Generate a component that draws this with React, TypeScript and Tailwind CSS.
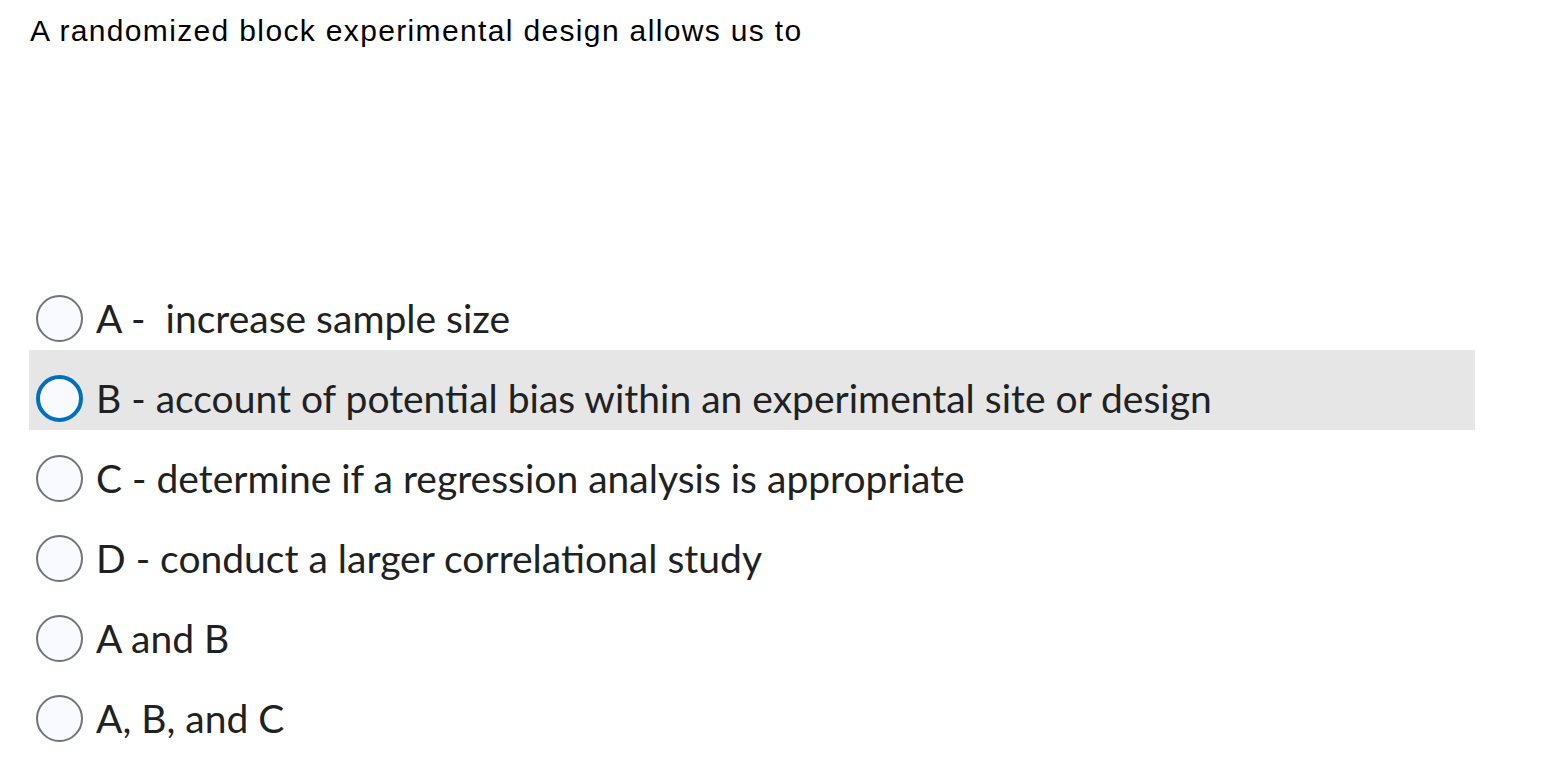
import React from 'react';

const options = [
  { id: 'a', label: 'A -  increase sample size' },
  { id: 'b', label: 'B - account of potential bias within an experimental site or design', hover: true },
  { id: 'c', label: 'C - determine if a regression analysis is appropriate' },
  { id: 'd', label: 'D - conduct a larger correlational study' },
  { id: 'ab', label: 'A and B' },
  { id: 'abc', label: 'A, B, and C' },
];

export default function App() {
  return (
    <div className="min-h-screen bg-white">
      {/* Question */}
      <p
        className="pl-[30px] pt-[14px] text-[30px] leading-[34px] tracking-[1.35px] text-black"
        style={{ fontFamily: '"Liberation Sans", Arial, sans-serif' }}
      >
        A randomized block experimental design allows us to
      </p>

      {/* Answers */}
      <div className="mt-[222px] w-[1446px] ml-[29px]">
        {options.map((o) => (
          <label
            key={o.id}
            className={`flex h-[80px] items-center pl-[7px] pt-[16px] ${o.hover ? 'bg-[#e6e6e6]' : ''}`}
          >
            <span
              className={`h-[47px] w-[47px] shrink-0 rounded-full bg-[#f9faff] ${
                o.hover ? 'border-[4px] border-[#006fbf]' : 'border-2 border-[#6f7478]'
              }`}
            />
            <span
              className="ml-[13px] whitespace-pre text-[39px] leading-[48px] text-[#202122]"
              style={{ fontFamily: 'Lato, "Noto Sans", sans-serif' }}
            >
              {o.label}
            </span>
          </label>
        ))}
      </div>
    </div>
  );
}
